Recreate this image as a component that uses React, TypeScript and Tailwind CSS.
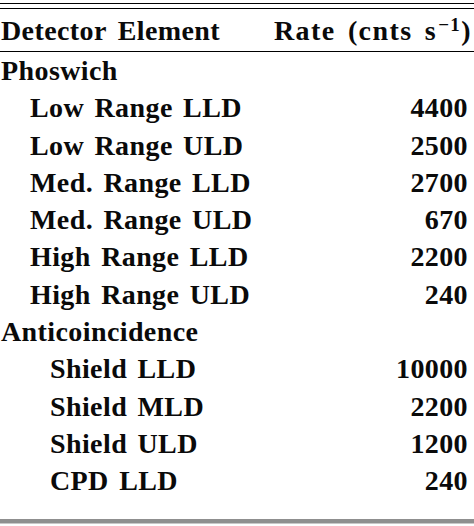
import React from "react";

type Row = { label: string; value?: string; indent: 0 | 1 | 2 };

const rows: Row[] = [
  { label: "Phoswich", indent: 0 },
  { label: "Low Range LLD", value: "4400", indent: 1 },
  { label: "Low Range ULD", value: "2500", indent: 1 },
  { label: "Med. Range LLD", value: "2700", indent: 1 },
  { label: "Med. Range ULD", value: "670", indent: 1 },
  { label: "High Range LLD", value: "2200", indent: 1 },
  { label: "High Range ULD", value: "240", indent: 1 },
  { label: "Anticoincidence", indent: 0 },
  { label: "Shield LLD", value: "10000", indent: 2 },
  { label: "Shield MLD", value: "2200", indent: 2 },
  { label: "Shield ULD", value: "1200", indent: 2 },
  { label: "CPD LLD", value: "240", indent: 2 },
];

export default function App() {
  return (
    <div
      className="w-[474px] h-[526px] bg-white text-[#0a0a0a] overflow-hidden font-bold text-[28px] leading-[37.5px] tracking-[0.4px]"
      style={{ fontFamily: '"Liberation Serif", "Times New Roman", serif' }}
    >
      <div className="pt-[3px]">
        <div className="h-px bg-black" />
        <div className="h-[4px]" />
        <div className="h-px bg-black" />
        <div className="flex justify-between pt-[3px] pb-[2px] h-[42px]">
          <span className="pl-[1px] [word-spacing:4px]">Detector Element</span>
          <span className="pr-[2px] whitespace-nowrap tracking-[1.4px] [word-spacing:4px]">
            Rate (cnts s<sup className="text-[19px] pl-[1px]">−1</sup>)
          </span>
        </div>
        <div className="h-px bg-black" />
        <div>
          {rows.map((r) => (
            <div key={r.label} className="flex justify-between h-[37.3px]">
              <span
                className={
                  (r.indent === 0 ? "pl-[1px]" : r.indent === 1 ? "pl-[30px]" : "pl-[50px]") +
                  " [word-spacing:3px]"
                }
              >
                {r.label}
              </span>
              {r.value && <span className="pr-[6px]">{r.value}</span>}
            </div>
          ))}
        </div>
        <div className="h-[19px]" />
        <div className="h-[4px] bg-[#8f8f8f]" />
        <div className="h-px bg-[#c8c8c8]" />
      </div>
    </div>
  );
}
